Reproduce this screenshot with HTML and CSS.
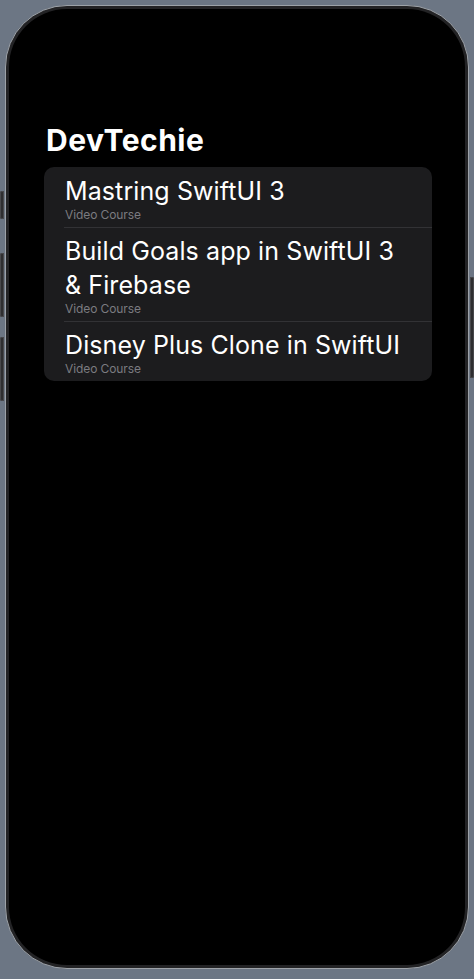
FILE: index.html
```html
<!DOCTYPE html>
<html lang="en">
<head>
<meta charset="utf-8">
<title>DevTechie</title>
<link rel="stylesheet" href="styles.css">
</head>
<body>
<div class="stage">
  <div class="btn btn-left btn-action"></div>
  <div class="btn btn-left btn-vol-up"></div>
  <div class="btn btn-left btn-vol-down"></div>
  <div class="btn btn-right btn-power"></div>
  <div class="device">
    <div class="screen">
      <h1 class="nav-title">DevTechie</h1>
      <ul class="list">
        <li class="row">
          <div class="row-title">Mastring SwiftUI 3</div>
          <div class="row-sub">Video Course</div>
        </li>
        <li class="row">
          <div class="row-title">Build Goals app in SwiftUI 3 &amp; Firebase</div>
          <div class="row-sub">Video Course</div>
        </li>
        <li class="row">
          <div class="row-title">Disney Plus Clone in SwiftUI</div>
          <div class="row-sub">Video Course</div>
        </li>
      </ul>
    </div>
  </div>
</div>
</body>
</html>
```

FILE: styles.css
```css
html, body {
  margin: 0;
  padding: 0;
  background: #6c7684;
  font-family: Inter, "Noto Sans", "Liberation Sans", sans-serif;
}

.stage {
  position: relative;
  width: 474px;
  height: 979px;
  padding: 5px 5px 0 5px;
  box-sizing: border-box;
}

.device {
  width: 464px;
  height: 964px;
  box-sizing: border-box;
  border-radius: 62px;
  border: 1px solid #9da2a8;
  background: #232325;
  padding: 3px;
}

.screen {
  height: 100%;
  box-sizing: border-box;
  border-radius: 58px;
  background: #000;
  padding: 114px 33px 0 35px;
}

.nav-title {
  margin: 0 0 9px 2px;
  font-size: 30px;
  line-height: 35px;
  font-weight: 700;
  color: #fff;
  letter-spacing: 0.5px;
}

.list {
  list-style: none;
  margin: 0;
  padding: 0;
  background: #1c1c1e;
  border-radius: 10px;
  overflow: hidden;
}

.row {
  padding: 7px 26px 6px 21px;
  position: relative;
}

.row + .row::before {
  content: "";
  position: absolute;
  top: 0;
  left: 20px;
  right: 0;
  height: 1px;
  background: #323235;
}

.row-title {
  font-size: 25px;
  line-height: 34px;
  color: #fff;
  letter-spacing: 0.1px;
}

.row-sub {
  font-size: 12px;
  line-height: 13px;
  color: #7b7b80;
  letter-spacing: -0.1px;
}

.btn {
  position: absolute;
  width: 4px;
  background: #2e2e30;
  box-shadow: inset 0 0 0 1px #48484b;
}

.btn-left { left: 0; border-radius: 2px 0 0 2px; }
.btn-right { right: 0; border-radius: 0 2px 2px 0; }

.btn-action { top: 191px; height: 28px; }
.btn-vol-up { top: 253px; height: 64px; }
.btn-vol-down { top: 337px; height: 64px; }
.btn-power { top: 277px; height: 101px; }
```
